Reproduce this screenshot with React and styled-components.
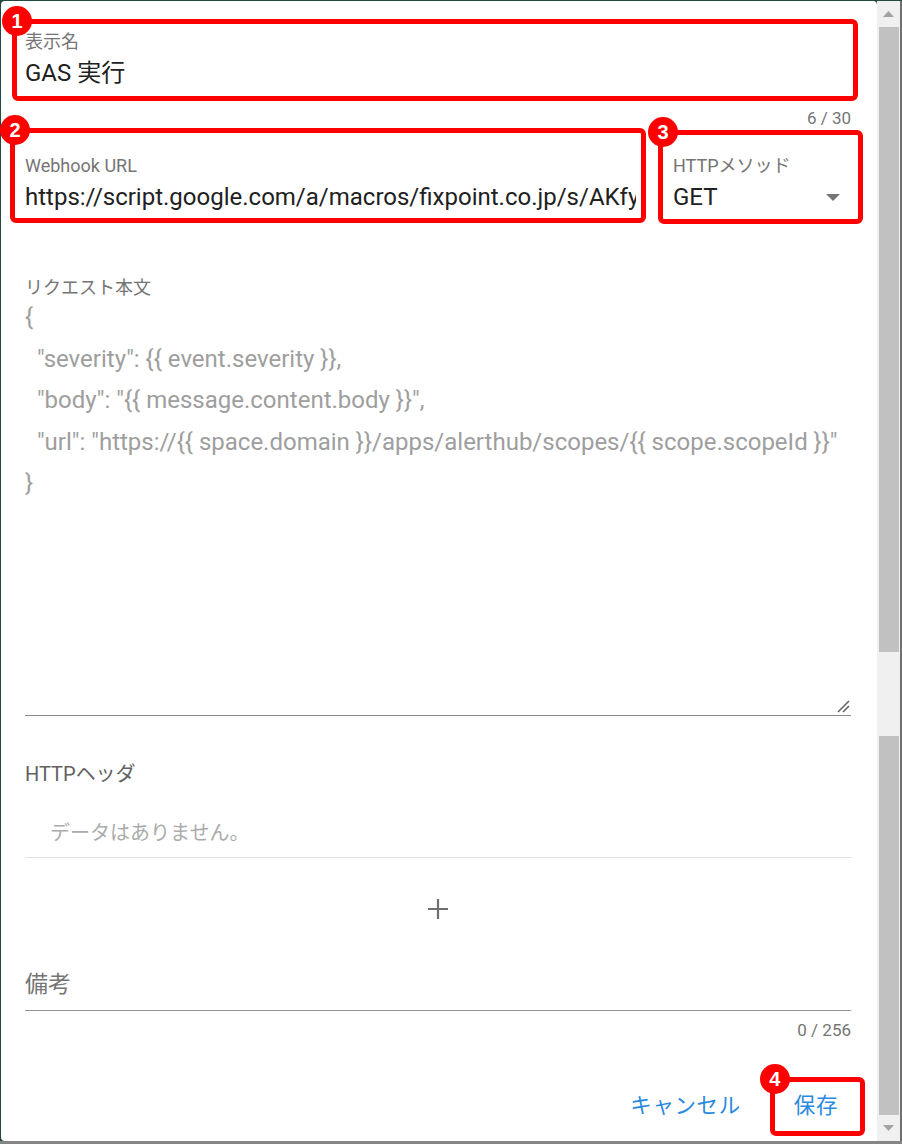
import React from "react";
import styled, { createGlobalStyle } from "styled-components";

const GlobalStyle = createGlobalStyle`
  html, body {
    margin: 0;
    padding: 0;
  }
  body {
    font-family: Roboto, "Noto Sans CJK JP", sans-serif;
    background: #24493f;
  }
`;

const Frame = styled.div`
  display: flex;
  width: 902px;
  height: 1144px;
  box-sizing: border-box;
  padding: 1px 0 0 1px;
  background: #24493f;
  border-bottom: 3px solid #858585;
  overflow: hidden;
`;

const Dialog = styled.div`
  flex: 1;
  min-width: 0;
  background: #fff;
  border-radius: 4px 4px 0 4px;
  padding: 29px 26px 0 24px;
  box-sizing: border-box;
`;

const Annotated = styled.div`
  position: relative;
  flex: ${(p) => p.$flex || "none"};
  min-width: 0;
  width: ${(p) => p.$width || "auto"};
`;

const Outline = styled.div`
  position: absolute;
  top: ${(p) => p.$t}px;
  left: ${(p) => p.$l}px;
  right: ${(p) => p.$r}px;
  bottom: ${(p) => p.$b}px;
  border: 5px solid #ff0000;
  border-radius: 6px;
  pointer-events: none;
`;

const Badge = styled.div`
  position: absolute;
  left: -15px;
  top: -18px;
  width: 30px;
  height: 30px;
  border-radius: 50%;
  background: #ff0000;
  color: #fff;
  font-family: "Liberation Sans", Arial, sans-serif;
  font-weight: 700;
  font-size: 20px;
  display: flex;
  align-items: center;
  justify-content: center;
`;

const Label = styled.div`
  font-size: 18px;
  line-height: 24px;
  color: #757575;
`;

const Value = styled.div`
  margin-top: 3px;
  font-size: 24px;
  line-height: 32px;
  color: #212121;
  white-space: nowrap;
  overflow: hidden;
`;

const SelectValue = styled(Value)`
  display: flex;
  align-items: center;
  justify-content: space-between;
  padding-right: 11px;
`;

const Counter = styled.div`
  margin-top: ${(p) => p.$mt}px;
  font-size: 17px;
  line-height: 20px;
  color: #757575;
  text-align: right;
`;

const Row = styled.div`
  display: flex;
  gap: 37px;
  margin-top: 26px;
`;

const SectionLabel = styled.div`
  margin-top: 66px;
  font-size: 18px;
  line-height: 18px;
  color: #757575;
`;

const BodyArea = styled.div`
  position: relative;
  height: 419px;
  box-sizing: border-box;
  border-bottom: 1px solid #8a8a8a;
`;

const BodyLine = styled.div`
  font-size: 24px;
  line-height: 41.5px;
  color: #9e9e9e;
  white-space: pre;
`;

const Grip = styled.svg`
  position: absolute;
  right: 1px;
  bottom: 2px;
`;

const HeaderTitle = styled.div`
  margin-top: 44px;
  font-size: 20px;
  line-height: 28px;
  color: #616161;
`;

const EmptyRow = styled.div`
  padding: 33px 0 12px 25px;
  font-size: 20px;
  line-height: 24px;
  color: #ababab;
  border-bottom: 1px solid #e0e0e0;
`;

const AddRow = styled.div`
  display: flex;
  justify-content: center;
  padding-top: 41px;
  height: 20px;
`;

const NoteField = styled.div`
  margin-top: 51px;
  padding-bottom: 10px;
  font-size: 23px;
  line-height: 30px;
  color: #757575;
  border-bottom: 1px solid #949494;
`;

const Actions = styled.div`
  display: flex;
  justify-content: flex-end;
  gap: 27px;
  margin-top: 51px;
`;

const TextButton = styled.button`
  border: none;
  background: none;
  padding: 0 13px;
  font-family: inherit;
  font-size: 21.5px;
  line-height: 30px;
  letter-spacing: 0.6px;
  color: #2a8ae0;
  cursor: pointer;
`;

const Scrollbar = styled.div`
  width: 23px;
  display: flex;
  flex-direction: column;
  background: #f0f0f0;
  border-right: 2px solid #6f6f6f;
`;

const ArrowBox = styled.div`
  height: 26px;
  display: flex;
  align-items: center;
  justify-content: center;
`;

const Thumb = styled.div`
  height: ${(p) => p.$h}px;
  margin: 0 1px 0 2px;
  background: #c1c1c1;
`;

const Gap = styled.div`
  height: ${(p) => p.$h}px;
`;

function Note({ n, t, l, r, b, children }) {
  return (
    <>
      {children}
      <Outline $t={t} $l={l} $r={r} $b={b}>
        <Badge>{n}</Badge>
      </Outline>
    </>
  );
}

const bodyLines = [
  "{",
  '  "severity": {{ event.severity }},',
  '  "body": "{{ message.content.body }}",',
  '  "url": "https://{{ space.domain }}/apps/alerthub/scopes/{{ scope.scopeId }}"',
  "}",
];

export default function App() {
  return (
    <>
      <GlobalStyle />
      <Frame>
        <Dialog>
          <Annotated>
            <Note n="1" t={-11} l={-13} r={-7} b={-12}>
              <Label>表示名</Label>
              <Value>GAS 実行</Value>
            </Note>
          </Annotated>
          <Counter $mt={19}>6 / 30</Counter>

          <Row>
            <Annotated $flex="1">
              <Note n="2" t={-26} l={-15} r={-10} b={-10}>
                <Label>Webhook URL</Label>
                <Value>
                  https://script.google.com/a/macros/fixpoint.co.jp/s/AKfycbx
                </Value>
              </Note>
            </Annotated>
            <Annotated $width="178px">
              <Note n="3" t={-24} l={-15} r={-12} b={-11}>
                <Label>HTTPメソッド</Label>
                <SelectValue>
                  GET
                  <svg width="14" height="7" viewBox="0 0 14 7">
                    <path d="M0 0h14L7 7z" fill="#757575" />
                  </svg>
                </SelectValue>
              </Note>
            </Annotated>
          </Row>

          <SectionLabel>リクエスト本文</SectionLabel>
          <BodyArea>
            {bodyLines.map((line, i) => (
              <BodyLine key={i}>{line}</BodyLine>
            ))}
            <Grip width="13" height="13" viewBox="0 0 13 13">
              <path
                d="M1 12L12 1M6 12L12 6"
                stroke="#666"
                strokeWidth="1.6"
                fill="none"
              />
            </Grip>
          </BodyArea>

          <HeaderTitle>HTTPヘッダ</HeaderTitle>
          <EmptyRow>データはありません。</EmptyRow>
          <AddRow>
            <svg width="20" height="20" viewBox="0 0 20 20">
              <path d="M10 0v20M0 10h20" stroke="#6f6f6f" strokeWidth="2.2" />
            </svg>
          </AddRow>

          <NoteField>備考</NoteField>
          <Counter $mt={9}>0 / 256</Counter>

          <Actions>
            <TextButton>キャンセル</TextButton>
            <Annotated>
              <Note n="4" t={-14} l={-11} r={-14} b={-15}>
                <TextButton>保存</TextButton>
              </Note>
            </Annotated>
          </Actions>
        </Dialog>

        <Scrollbar>
          <ArrowBox>
            <svg width="11" height="6" viewBox="0 0 11 6">
              <path d="M0 6h11L5.5 0z" fill="#a3a3a3" />
            </svg>
          </ArrowBox>
          <Thumb $h={627} />
          <Gap $h={84} />
          <Thumb $h={380} />
          <ArrowBox>
            <svg width="11" height="6" viewBox="0 0 11 6">
              <path d="M0 0h11L5.5 6z" fill="#a3a3a3" />
            </svg>
          </ArrowBox>
        </Scrollbar>
      </Frame>
    </>
  );
}
